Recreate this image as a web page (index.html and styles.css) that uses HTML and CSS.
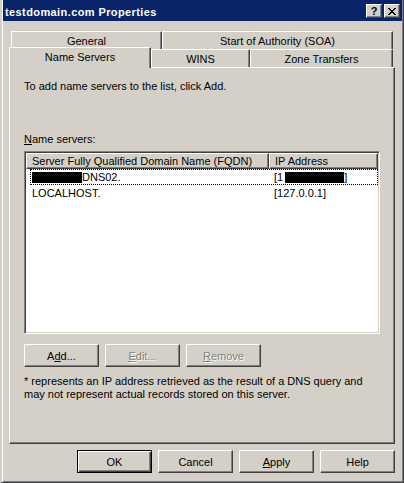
FILE: index.html
```html
<!DOCTYPE html>
<html lang="en">
<head>
    <meta charset="UTF-8">
    <meta name="viewport" content="width=device-width, initial-scale=1.0">
    <title>testdomain.com Properties</title>
    <link rel="stylesheet" href="styles.css">
</head>
<body>
    <div class="window">
        <div class="titlebar">
            <span class="title">testdomain.com Properties</span>
            <div class="caption-btns">
                <span class="cap-btn cap-help">?</span>
                <span class="cap-btn">
                    <svg width="8" height="7" viewBox="0 0 8 7" shape-rendering="crispEdges">
                        <path d="M0 0h2v1H0z M6 0h2v1H6z M1 1h2v1H1z M5 1h2v1H5z M2 2h4v1H2z M3 3h2v1H3z M2 4h4v1H2z M1 5h2v1H1z M5 5h2v1H5z M0 6h2v1H0z M6 6h2v1H6z" fill="#000"/>
                    </svg>
                </span>
            </div>
        </div>

        <div class="client">
            <div class="tabs">
                <div class="tab-row">
                    <div class="tab tab-general">General</div>
                    <div class="tab tab-soa">Start of Authority (SOA)</div>
                </div>
                <div class="tab-row front">
                    <div class="tab tab-ns selected">Name Servers</div>
                    <div class="tab tab-wins">WINS</div>
                    <div class="tab tab-zone">Zone Transfers</div>
                </div>
            </div>

            <div class="panel">
                <div class="intro">To add name servers to the list, click Add.</div>
                <div class="label"><u>N</u>ame servers:</div>

                <div class="list">
                    <div class="list-header">
                        <div class="col-head col-fqdn">Server Fully Qualified Domain Name (FQDN)</div>
                        <div class="col-head col-ip">IP Address</div>
                    </div>
                    <div class="row focused">
                        <div class="cell-fqdn"><span class="redact redact-name"></span>DNS02.</div>
                        <div class="cell-ip">[1<span class="redact redact-ip"></span>]</div>
                    </div>
                    <div class="row">
                        <div class="cell-fqdn">LOCALHOST.</div>
                        <div class="cell-ip">[127.0.0.1]</div>
                    </div>
                </div>

                <div class="list-btns">
                    <button class="btn">A<u>d</u>d...</button>
                    <button class="btn" disabled><u>E</u>dit...</button>
                    <button class="btn" disabled><u>R</u>emove</button>
                </div>

                <div class="note">* represents an IP address retrieved as the result of a DNS query and<br>may not represent actual records stored on this server.</div>
            </div>

            <div class="dialog-btns">
                <button class="btn default">OK</button>
                <button class="btn">Cancel</button>
                <button class="btn"><u>A</u>pply</button>
                <button class="btn">Help</button>
            </div>
        </div>
    </div>
</body>
</html>
```

FILE: styles.css
```css
body {
    margin: 0;
    background-color: #d4d0c8;
    font-family: "Liberation Sans", Arial, sans-serif;
    font-size: 11px;
    color: #000;
}
.window {
    box-sizing: border-box;
    width: 404px;
    height: 483px;
    background-color: #d4d0c8;
    border-left: 2px solid #d4d0c8;
    border-right: 1px solid #404040;
    border-bottom: 1px solid #404040;
    box-shadow: inset 1px 0 #fff, inset -1px -1px #808080;
    padding: 0 1px 1px 1px;
    display: flex;
    flex-direction: column;
}
.titlebar {
    height: 21px;
    background-color: #0a246a;
    color: #fff;
    display: flex;
    justify-content: space-between;
    align-items: flex-start;
    padding: 0 2px;
}
.title {
    font-weight: bold;
    letter-spacing: 0.4px;
    line-height: 17px;
    padding-top: 4px;
}
.caption-btns {
    display: flex;
    gap: 2px;
    margin-top: 4px;
}
.cap-btn {
    box-sizing: border-box;
    width: 16px;
    height: 14px;
    background-color: #d4d0c8;
    border: 1px solid;
    border-color: #fff #404040 #404040 #fff;
    box-shadow: inset -1px -1px #808080;
    display: flex;
    align-items: center;
    justify-content: center;
    color: #000;
}
.cap-help {
    font-weight: bold;
    font-size: 11px;
    line-height: 12px;
}
.client {
    flex: 1;
    display: flex;
    flex-direction: column;
}
.tabs {
    margin: 10px 0 0 8px;
}
.tab-row {
    display: flex;
    align-items: flex-end;
    height: 18px;
}
.tab-row.front {
    margin-left: -2px;
}
.tab {
    box-sizing: border-box;
    height: 18px;
    background-color: #d4d0c8;
    border-top: 1px solid #fff;
    border-left: 1px solid #fff;
    border-right: 1px solid #404040;
    box-shadow: inset -1px 0 #808080;
    text-align: center;
    padding-top: 2px;
    line-height: 15px;
}
.tab.selected {
    height: 21px;
    margin-bottom: -1px;
    position: relative;
    z-index: 1;
}
.tab-general { width: 151px; }
.tab-soa { width: 231px; }
.tab-ns { width: 142px; }
.tab-wins { width: 99px; }
.tab-zone { width: 143px; }
.panel {
    box-sizing: border-box;
    width: 386px;
    height: 377px;
    margin-left: 6px;
    border: 1px solid;
    border-color: #fff #404040 #404040 #fff;
    box-shadow: inset -1px -1px #808080;
    padding: 12px 13px 0 14px;
    line-height: 13px;
}
.intro {
    margin-bottom: 40px;
}
.label {
    margin-bottom: 5px;
}
.list {
    box-sizing: border-box;
    width: 356px;
    height: 183px;
    background-color: #fff;
    border: 1px solid;
    border-color: #808080 #fff #fff #808080;
    box-shadow: inset 1px 1px #404040, inset -1px -1px #d4d0c8;
    padding: 1px;
}
.list-header {
    display: flex;
    height: 16px;
}
.col-head {
    box-sizing: border-box;
    background-color: #d4d0c8;
    border-top: 1px solid #fff;
    border-left: 1px solid #fff;
    border-right: 1px solid #404040;
    border-bottom: 1px solid #404040;
    box-shadow: inset -1px -1px #808080;
    padding-left: 5px;
    line-height: 14px;
    white-space: nowrap;
}
.col-fqdn { width: 243px; }
.col-ip { width: 109px; }
.row {
    display: flex;
    height: 16px;
    line-height: 16px;
    width: 348px;
    margin-left: 4px;
    white-space: nowrap;
}
.row.focused {
    outline: 1px dotted #000;
    outline-offset: -1px;
}
.cell-fqdn {
    width: 239px;
    padding-left: 2px;
    box-sizing: border-box;
}
.cell-ip {
    padding-left: 5px;
}
.redact {
    display: inline-block;
    background-color: #000;
    height: 11px;
    vertical-align: -2px;
}
.redact-name { width: 50px; }
.redact-ip { width: 59px; margin-left: 2px; }
.list-btns {
    display: flex;
    gap: 6px;
    margin-top: 10px;
}
.btn {
    box-sizing: border-box;
    width: 75px;
    height: 23px;
    padding: 0;
    font-family: inherit;
    font-size: 11px;
    color: #000;
    background-color: #d4d0c8;
    border: 1px solid;
    border-color: #fff #404040 #404040 #fff;
    border-radius: 0;
    box-shadow: inset -1px -1px #808080;
}
.btn:disabled {
    color: #808080;
    text-shadow: 1px 1px #fff;
}
.btn.default {
    border-color: #000;
    box-shadow: inset 1px 1px #fff, inset -1px -1px #404040, inset -2px -2px #808080;
}
.note {
    margin-top: 8px;
}
.dialog-btns {
    display: flex;
    justify-content: flex-end;
    gap: 6px;
    margin-top: 6px;
    padding-right: 7px;
}
```
